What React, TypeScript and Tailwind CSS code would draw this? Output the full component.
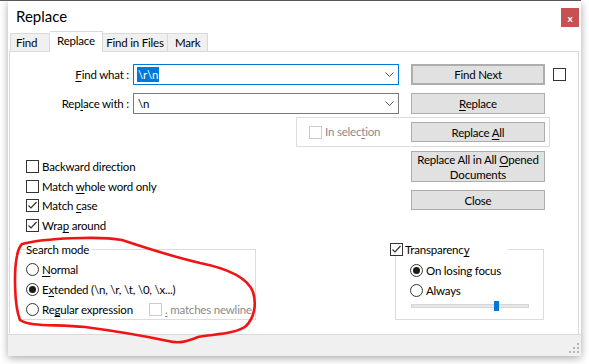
import React from "react";

const FONT = "font-['Lato','Noto_Sans',sans-serif]";

function U({ children }: { children: React.ReactNode }) {
  return <span className="underline underline-offset-[2px] decoration-[1px]">{children}</span>;
}

function Check({ checked = false, disabled = false }: { checked?: boolean; disabled?: boolean }) {
  return (
    <div
      className={
        disabled
          ? "w-[13px] h-[13px] shrink-0 border border-[#cccccc] bg-white"
          : "w-[13px] h-[13px] shrink-0 border border-[#333333] bg-white flex items-center justify-center"
      }
    >
      {checked && (
        <svg width="11" height="11" viewBox="0 0 11 11">
          <path d="M1.5 5.5 L4 8 L9.5 2" fill="none" stroke="#333" strokeWidth="1.2" />
        </svg>
      )}
    </div>
  );
}

function Radio({ checked = false }: { checked?: boolean }) {
  return (
    <div className="w-[13px] h-[13px] shrink-0 rounded-full border border-[#333333] bg-white flex items-center justify-center">
      {checked && <div className="w-[7px] h-[7px] rounded-full bg-[#1a1a1a]" />}
    </div>
  );
}

function Chevron() {
  return (
    <svg width="9" height="5" viewBox="0 0 9 5" className="shrink-0">
      <path d="M0.5 0.5 L4.5 4.5 L8.5 0.5" fill="none" stroke="#555" strokeWidth="1" />
    </svg>
  );
}

function Btn({ children, className = "" }: { children: React.ReactNode; className?: string }) {
  return (
    <div
      className={
        "w-[134px] shrink-0 bg-[#e1e1e1] border border-[#adadad] flex items-center justify-center text-center leading-[15px] text-black " +
        className
      }
    >
      <span>{children}</span>
    </div>
  );
}

export default function App() {
  return (
    <div
      className={
        "relative w-[589px] h-[364px] overflow-hidden bg-white text-[11.5px] tracking-[-0.2px] text-[#1a1a1a] whitespace-nowrap " +
        FONT
      }
    >
      <div className="w-[581px] h-[1px] bg-[#5f5f5f]" />
      <div className="flex pl-[8px]">
        <div className="w-[573px] h-[355px] bg-white flex flex-col shadow-[0_2px_8px_rgba(0,0,0,0.35)]">
          {/* Title bar */}
          <div className="h-[30px] flex items-start shrink-0">
            <div className="h-[30px] flex items-center pl-[8px] text-[15px] tracking-normal text-black">Replace</div>
            <div className="ml-auto mr-[2px] mt-[7px] w-[18px] h-[19px] bg-[#c75050] flex items-center justify-center text-white text-[10px] font-bold leading-none">
              x
            </div>
          </div>
          {/* Tabs */}
          <div className="h-[20px] flex items-end pl-[2px] shrink-0 relative z-10">
            <div className="w-[40px] h-[18px] border border-b-0 border-[#d9d9d9] bg-[#f0f0f0] pl-[5px] leading-[17px] text-black">
              Find
            </div>
            <div className="w-[53px] h-[21px] -mb-[1px] border border-b-0 border-l-0 border-[#d9d9d9] bg-white text-center leading-[18px] text-black">
              Replace
            </div>
            <div className="w-[65px] h-[18px] border border-b-0 border-l-0 border-[#d9d9d9] bg-[#f0f0f0] text-center leading-[17px] text-black">
              Find in Files
            </div>
            <div className="w-[40px] h-[18px] border border-b-0 border-l-0 border-[#d9d9d9] bg-[#f0f0f0] pl-[7px] leading-[17px] text-black">
              Mark
            </div>
          </div>
          {/* Panel */}
          <div className="ml-[1px] w-[570px] h-[283px] border border-b-0 border-[#d9d9d9] flex flex-col">
            {/* Row A1 */}
            <div className="mt-[12px] flex items-center h-[21px]">
              <div className="w-[119px] text-right text-black">
                <U>F</U>ind what :
              </div>
              <div className="ml-[4px] w-[266px] h-[21px] border border-[#0078d7] flex items-center pl-[3px] pr-[4px]">
                <span className="bg-[#0078d7] text-white leading-[15px] px-[1px]">\r\n</span>
                <div className="ml-auto">
                  <Chevron />
                </div>
              </div>
              <Btn className="ml-[12px] h-[21px] border-2 border-[#0078d7]">Find Next</Btn>
              <div className="ml-[8px]">
                <Check />
              </div>
            </div>
            {/* Row A2 */}
            <div className="mt-[8px] flex items-center h-[21px]">
              <div className="w-[119px] text-right text-black">
                Rep<U>l</U>ace with :
              </div>
              <div className="ml-[4px] w-[266px] h-[21px] border border-[#7a7a7a] flex items-center pl-[4px] pr-[4px]">
                <span className="text-black">\n</span>
                <div className="ml-auto">
                  <Chevron />
                </div>
              </div>
              <Btn className="ml-[12px] h-[21px]">
                <U>R</U>eplace
              </Btn>
            </div>
            {/* Row B: in selection group */}
            <div className="mt-[3px] ml-[286px] w-[254px] h-[30px] border border-[#dcdcdc] flex items-center">
              <div className="ml-[12px]">
                <Check disabled />
              </div>
              <span className="ml-[3px] text-[#8a8a8a]">
                In selec<U>t</U>ion
              </span>
              <Btn className="ml-auto mr-[4px] h-[20px]">
                Replace <U>A</U>ll
              </Btn>
            </div>
            {/* Row C */}
            <div className="flex items-start">
              <div className="ml-[16px] w-[385px] mt-[13px] flex flex-col text-black">
                <div className="flex items-center h-[13px] gap-[3px]">
                  <Check />
                  <span>Backward direction</span>
                </div>
                <div className="flex items-center h-[13px] gap-[3px] mt-[7px]">
                  <Check />
                  <span>
                    Match <U>w</U>hole word only
                  </span>
                </div>
                <div className="flex items-center h-[13px] gap-[3px] mt-[6px]">
                  <Check checked />
                  <span>
                    Match <U>c</U>ase
                  </span>
                </div>
                <div className="flex items-center h-[13px] gap-[3px] mt-[7px]">
                  <Check checked />
                  <span>
                    Wra<U>p</U> around
                  </span>
                </div>
              </div>
              <div className="mt-[4px] flex flex-col">
                <Btn className="h-[31px]">
                  Replace All in All <U>O</U>pened
                  <br />
                  Documents
                </Btn>
                <Btn className="h-[20px] mt-[8px]">Close</Btn>
              </div>
            </div>
            {/* Row D */}
            <div className="mt-[11px] flex items-start text-black">
              {/* Search mode */}
              <div className="relative ml-[8px] w-[238px] pt-[6px]">
                <div className="h-[71px] border border-l-0 border-[#dcdcdc] flex flex-col pt-[13px] pl-[8px]">
                  <div className="flex items-center h-[13px]">
                    <Radio />
                    <span className="ml-[3px]">
                      <U>N</U>ormal
                    </span>
                  </div>
                  <div className="flex items-center h-[13px] mt-[7px]">
                    <Radio checked />
                    <span className="ml-[3px]">
                      E<U>x</U>tended (\n, \r, \t, \0, \x...)
                    </span>
                  </div>
                  <div className="flex items-center h-[13px] mt-[7px]">
                    <div className="w-[123px] flex items-center shrink-0">
                      <Radio />
                      <span className="ml-[3px]">
                        Re<U>g</U>ular expression
                      </span>
                    </div>
                    <Check disabled />
                    <span className="ml-[3px] text-[#8a8a8a]">
                      <U>.</U> matches newline
                    </span>
                  </div>
                </div>
                <div className="absolute top-0 left-[8px] h-[13px] leading-[13px] bg-white pr-[3px]">Search mode</div>
              </div>
              {/* Transparency */}
              <div className="relative ml-[134px] w-[154px] pt-[6px]">
                <div className="ml-[5px] w-[149px] h-[71px] border border-[#dcdcdc] flex flex-col pt-[14px] pl-[14px]">
                  <div className="flex items-center h-[13px]">
                    <Radio checked />
                    <span className="ml-[3px]">On losing focus</span>
                  </div>
                  <div className="flex items-center h-[13px] mt-[7px]">
                    <Radio />
                    <span className="ml-[3px]">Always</span>
                  </div>
                  <div className="relative mt-[4px] h-[10px] flex items-center">
                    <div className="ml-[1px] w-[118px] h-[4px] bg-[#e7e7e7] border border-[#d6d6d6]" />
                    <div className="absolute left-[84px] top-0 w-[5px] h-[10px] bg-[#0078d7]" />
                  </div>
                </div>
                <div className="absolute top-0 left-0 w-[118px] h-[13px] bg-white flex items-center">
                  <Check checked />
                  <span className="ml-[2px] leading-[13px]">
                    Transparenc<U>y</U>
                  </span>
                </div>
              </div>
            </div>
          </div>
          {/* Footer */}
          <div className="h-[22px] bg-[#f0f0f0] border-t border-[#dadada] flex justify-end items-end pr-[2px] pb-[3px]">
            <svg width="10" height="10" viewBox="0 0 10 10">
              <rect x="8" y="0" width="2" height="2" fill="#b5b5b5" />
              <rect x="4" y="4" width="2" height="2" fill="#b5b5b5" />
              <rect x="8" y="4" width="2" height="2" fill="#b5b5b5" />
              <rect x="0" y="8" width="2" height="2" fill="#b5b5b5" />
              <rect x="4" y="8" width="2" height="2" fill="#b5b5b5" />
              <rect x="8" y="8" width="2" height="2" fill="#b5b5b5" />
            </svg>
          </div>
        </div>
      </div>
      {/* Red annotation */}
      <svg className="absolute inset-0 pointer-events-none" width="589" height="364" viewBox="0 0 589 364">
        <path
          d="M22 244 C 45 238, 100 236, 122 240 C 140 246, 170 256, 200 263 C 225 268, 247 276, 253 292 C 257 305, 254 318, 246 326 C 236 334, 215 334, 198 337 C 188 341, 180 344, 168 341 C 140 335, 115 331, 85 327 C 55 324, 30 327, 20 320 C 14 305, 14 270, 17 256 C 18 250, 20 246, 22 244 Z"
          fill="none"
          stroke="#f01515"
          strokeWidth="2.6"
          strokeLinejoin="round"
        />
      </svg>
    </div>
  );
}
